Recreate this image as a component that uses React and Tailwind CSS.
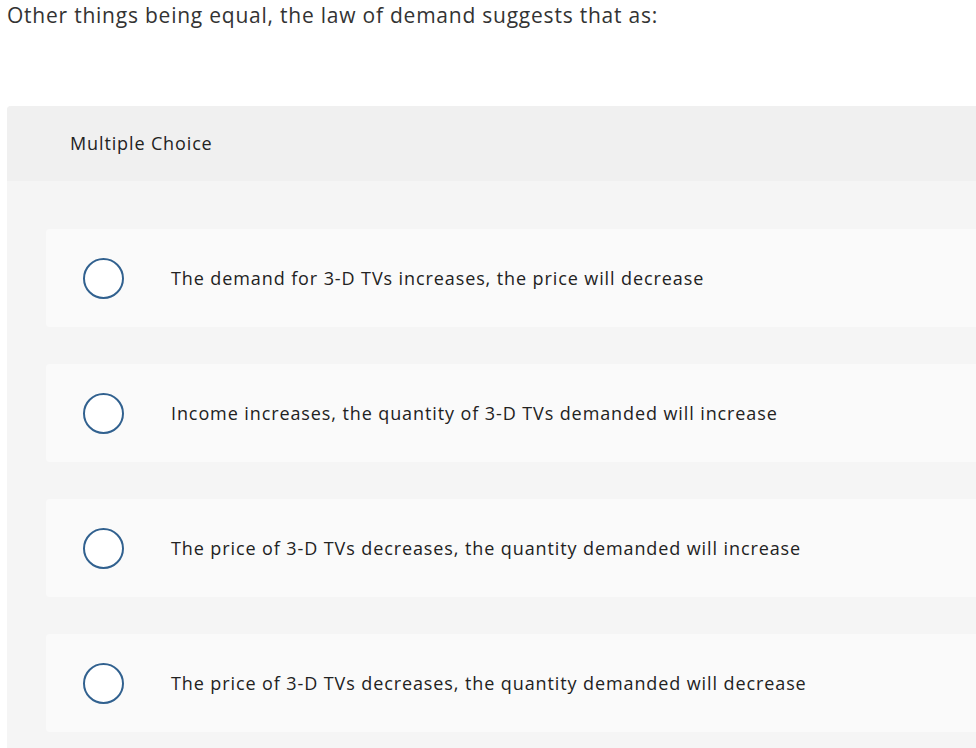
export default function App() {
  const options = [
    "The demand for 3-D TVs increases, the price will decrease",
    "Income increases, the quantity of 3-D TVs demanded will increase",
    "The price of 3-D TVs decreases, the quantity demanded will increase",
    "The price of 3-D TVs decreases, the quantity demanded will decrease",
  ];
  return (
    <div className="w-[976px] h-[748px] overflow-hidden bg-white text-[#222]" style={{ fontFamily: "'Open Sans', 'Noto Sans', sans-serif" }}>
      <div className="pl-[7px] pt-[1px] h-[106px] text-[21px] leading-[28px] tracking-[0.77px] text-[#333]">
        Other things being equal, the law of demand suggests that as:
      </div>
      <div className="ml-[7px] rounded-tl-[4px] bg-[#f5f5f5] overflow-hidden">
        <div className="h-[75px] bg-[#f0f0f0] pl-[63px] flex items-center text-[18px] tracking-[0.87px] text-[#222]">
          Multiple Choice
        </div>
        <div className="pl-[39px] pt-[48px] flex flex-col gap-[37px] pb-[20px]">
          {options.map((o, i) => (
            <div key={i} className="h-[98px] bg-[#fafafa] rounded-l-[4px] flex items-center">
              <div className="ml-[37px] w-[41px] h-[41px] rounded-full border-2 border-[#31618f] bg-white shrink-0" />
              <div className="ml-[47px] text-[18px] tracking-[0.9px] text-[#222]">{o}</div>
            </div>
          ))}
        </div>
      </div>
    </div>
  );
}
